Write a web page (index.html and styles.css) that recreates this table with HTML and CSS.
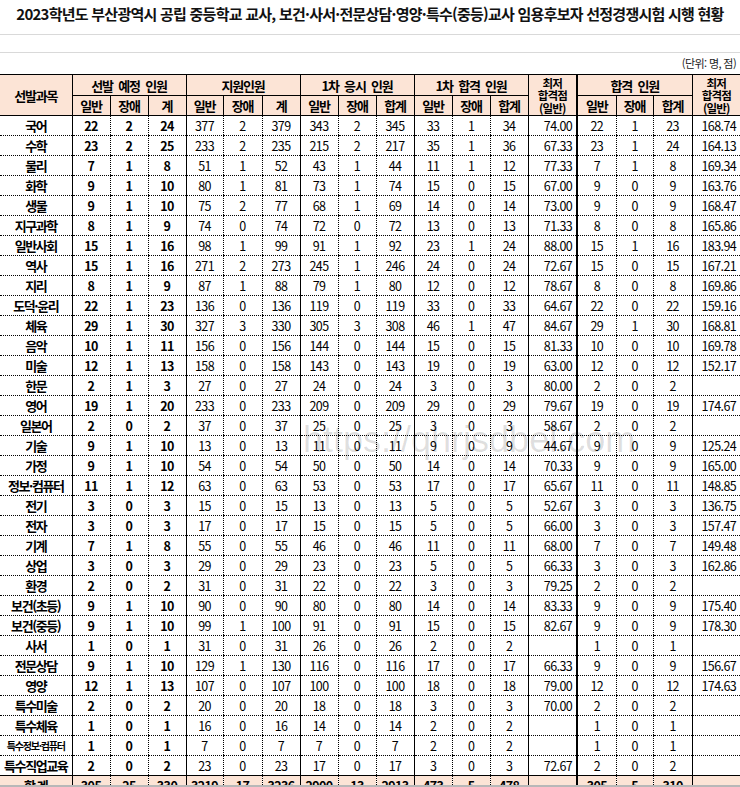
FILE: index.html
```html
<!DOCTYPE html>
<html lang="ko">
<head>
<meta charset="utf-8">
<title>2023학년도 부산광역시 임용후보자 선정경쟁시험 시행 현황</title>
<link rel="stylesheet" href="styles.css">
</head>
<body>
<div class="sheet">
  <h1 class="title">2023학년도 부산광역시 공립 중등학교 교사, 보건·사서·전문상담·영양·특수(중등)교사 임용후보자 선정경쟁시험 시행 현황</h1>
  <div class="blank-row"></div>
  <div class="unit-row">(단위: 명, 점)</div>
  <table class="stats">
    <colgroup>
      <col class="c-subj">
      <col class="c38"><col class="c38"><col class="c38">
      <col class="c37"><col class="c39"><col class="c38">
      <col class="c38"><col class="c38"><col class="c38">
      <col class="c38"><col class="c38"><col class="c38">
      <col class="c-score">
      <col class="c39"><col class="c37"><col class="c39">
      <col class="c-score2">
    </colgroup>
    <thead>
      <tr class="h1">
        <th rowspan="2" class="subj">선발과목</th>
        <th colspan="3">선발 예정 인원</th>
        <th colspan="3">지원인원</th>
        <th colspan="3">1차 응시 인원</th>
        <th colspan="3">1차 합격 인원</th>
        <th rowspan="2" class="score"><span class="ln">최저</span><span class="ln">합격점</span><span class="ln">(일반)</span></th>
        <th colspan="3" class="thick">합격 인원</th>
        <th rowspan="2" class="score last"><span class="ln">최저</span><span class="ln">합격점</span><span class="ln">(일반)</span></th>
      </tr>
      <tr class="h2">
        <th>일반</th><th>장애</th><th>계</th>
        <th>일반</th><th>장애</th><th>계</th>
        <th>일반</th><th>장애</th><th>합계</th>
        <th>일반</th><th>장애</th><th>합계</th>
        <th>일반</th><th>장애</th><th>합계</th>
      </tr>
    </thead>
    <tbody>
      <tr><td>국어</td><td>22</td><td>2</td><td>24</td><td>377</td><td>2</td><td>379</td><td>343</td><td>2</td><td>345</td><td>33</td><td>1</td><td>34</td><td>74.00</td><td>22</td><td>1</td><td>23</td><td>168.74</td></tr>
      <tr><td>수학</td><td>23</td><td>2</td><td>25</td><td>233</td><td>2</td><td>235</td><td>215</td><td>2</td><td>217</td><td>35</td><td>1</td><td>36</td><td>67.33</td><td>23</td><td>1</td><td>24</td><td>164.13</td></tr>
      <tr><td>물리</td><td>7</td><td>1</td><td>8</td><td>51</td><td>1</td><td>52</td><td>43</td><td>1</td><td>44</td><td>11</td><td>1</td><td>12</td><td>77.33</td><td>7</td><td>1</td><td>8</td><td>169.34</td></tr>
      <tr><td>화학</td><td>9</td><td>1</td><td>10</td><td>80</td><td>1</td><td>81</td><td>73</td><td>1</td><td>74</td><td>15</td><td>0</td><td>15</td><td>67.00</td><td>9</td><td>0</td><td>9</td><td>163.76</td></tr>
      <tr><td>생물</td><td>9</td><td>1</td><td>10</td><td>75</td><td>2</td><td>77</td><td>68</td><td>1</td><td>69</td><td>14</td><td>0</td><td>14</td><td>73.00</td><td>9</td><td>0</td><td>9</td><td>168.47</td></tr>
      <tr><td>지구과학</td><td>8</td><td>1</td><td>9</td><td>74</td><td>0</td><td>74</td><td>72</td><td>0</td><td>72</td><td>13</td><td>0</td><td>13</td><td>71.33</td><td>8</td><td>0</td><td>8</td><td>165.86</td></tr>
      <tr><td>일반사회</td><td>15</td><td>1</td><td>16</td><td>98</td><td>1</td><td>99</td><td>91</td><td>1</td><td>92</td><td>23</td><td>1</td><td>24</td><td>88.00</td><td>15</td><td>1</td><td>16</td><td>183.94</td></tr>
      <tr><td>역사</td><td>15</td><td>1</td><td>16</td><td>271</td><td>2</td><td>273</td><td>245</td><td>1</td><td>246</td><td>24</td><td>0</td><td>24</td><td>72.67</td><td>15</td><td>0</td><td>15</td><td>167.21</td></tr>
      <tr><td>지리</td><td>8</td><td>1</td><td>9</td><td>87</td><td>1</td><td>88</td><td>79</td><td>1</td><td>80</td><td>12</td><td>0</td><td>12</td><td>78.67</td><td>8</td><td>0</td><td>8</td><td>169.86</td></tr>
      <tr><td>도덕·윤리</td><td>22</td><td>1</td><td>23</td><td>136</td><td>0</td><td>136</td><td>119</td><td>0</td><td>119</td><td>33</td><td>0</td><td>33</td><td>64.67</td><td>22</td><td>0</td><td>22</td><td>159.16</td></tr>
      <tr><td>체육</td><td>29</td><td>1</td><td>30</td><td>327</td><td>3</td><td>330</td><td>305</td><td>3</td><td>308</td><td>46</td><td>1</td><td>47</td><td>84.67</td><td>29</td><td>1</td><td>30</td><td>168.81</td></tr>
      <tr><td>음악</td><td>10</td><td>1</td><td>11</td><td>156</td><td>0</td><td>156</td><td>144</td><td>0</td><td>144</td><td>15</td><td>0</td><td>15</td><td>81.33</td><td>10</td><td>0</td><td>10</td><td>169.78</td></tr>
      <tr><td>미술</td><td>12</td><td>1</td><td>13</td><td>158</td><td>0</td><td>158</td><td>143</td><td>0</td><td>143</td><td>19</td><td>0</td><td>19</td><td>63.00</td><td>12</td><td>0</td><td>12</td><td>152.17</td></tr>
      <tr><td>한문</td><td>2</td><td>1</td><td>3</td><td>27</td><td>0</td><td>27</td><td>24</td><td>0</td><td>24</td><td>3</td><td>0</td><td>3</td><td>80.00</td><td>2</td><td>0</td><td>2</td><td></td></tr>
      <tr><td>영어</td><td>19</td><td>1</td><td>20</td><td>233</td><td>0</td><td>233</td><td>209</td><td>0</td><td>209</td><td>29</td><td>0</td><td>29</td><td>79.67</td><td>19</td><td>0</td><td>19</td><td>174.67</td></tr>
      <tr><td>일본어</td><td>2</td><td>0</td><td>2</td><td>37</td><td>0</td><td>37</td><td>25</td><td>0</td><td>25</td><td>3</td><td>0</td><td>3</td><td>58.67</td><td>2</td><td>0</td><td>2</td><td></td></tr>
      <tr><td>기술</td><td>9</td><td>1</td><td>10</td><td>13</td><td>0</td><td>13</td><td>11</td><td>0</td><td>11</td><td>9</td><td>0</td><td>9</td><td>44.67</td><td>9</td><td>0</td><td>9</td><td>125.24</td></tr>
      <tr><td>가정</td><td>9</td><td>1</td><td>10</td><td>54</td><td>0</td><td>54</td><td>50</td><td>0</td><td>50</td><td>14</td><td>0</td><td>14</td><td>70.33</td><td>9</td><td>0</td><td>9</td><td>165.00</td></tr>
      <tr><td>정보·컴퓨터</td><td>11</td><td>1</td><td>12</td><td>63</td><td>0</td><td>63</td><td>53</td><td>0</td><td>53</td><td>17</td><td>0</td><td>17</td><td>65.67</td><td>11</td><td>0</td><td>11</td><td>148.85</td></tr>
      <tr><td>전기</td><td>3</td><td>0</td><td>3</td><td>15</td><td>0</td><td>15</td><td>13</td><td>0</td><td>13</td><td>5</td><td>0</td><td>5</td><td>52.67</td><td>3</td><td>0</td><td>3</td><td>136.75</td></tr>
      <tr><td>전자</td><td>3</td><td>0</td><td>3</td><td>17</td><td>0</td><td>17</td><td>15</td><td>0</td><td>15</td><td>5</td><td>0</td><td>5</td><td>66.00</td><td>3</td><td>0</td><td>3</td><td>157.47</td></tr>
      <tr><td>기계</td><td>7</td><td>1</td><td>8</td><td>55</td><td>0</td><td>55</td><td>46</td><td>0</td><td>46</td><td>11</td><td>0</td><td>11</td><td>68.00</td><td>7</td><td>0</td><td>7</td><td>149.48</td></tr>
      <tr><td>상업</td><td>3</td><td>0</td><td>3</td><td>29</td><td>0</td><td>29</td><td>23</td><td>0</td><td>23</td><td>5</td><td>0</td><td>5</td><td>66.33</td><td>3</td><td>0</td><td>3</td><td>162.86</td></tr>
      <tr><td>환경</td><td>2</td><td>0</td><td>2</td><td>31</td><td>0</td><td>31</td><td>22</td><td>0</td><td>22</td><td>3</td><td>0</td><td>3</td><td>79.25</td><td>2</td><td>0</td><td>2</td><td></td></tr>
      <tr><td>보건(초등)</td><td>9</td><td>1</td><td>10</td><td>90</td><td>0</td><td>90</td><td>80</td><td>0</td><td>80</td><td>14</td><td>0</td><td>14</td><td>83.33</td><td>9</td><td>0</td><td>9</td><td>175.40</td></tr>
      <tr><td>보건(중등)</td><td>9</td><td>1</td><td>10</td><td>99</td><td>1</td><td>100</td><td>91</td><td>0</td><td>91</td><td>15</td><td>0</td><td>15</td><td>82.67</td><td>9</td><td>0</td><td>9</td><td>178.30</td></tr>
      <tr><td>사서</td><td>1</td><td>0</td><td>1</td><td>31</td><td>0</td><td>31</td><td>26</td><td>0</td><td>26</td><td>2</td><td>0</td><td>2</td><td></td><td>1</td><td>0</td><td>1</td><td></td></tr>
      <tr><td>전문상담</td><td>9</td><td>1</td><td>10</td><td>129</td><td>1</td><td>130</td><td>116</td><td>0</td><td>116</td><td>17</td><td>0</td><td>17</td><td>66.33</td><td>9</td><td>0</td><td>9</td><td>156.67</td></tr>
      <tr><td>영양</td><td>12</td><td>1</td><td>13</td><td>107</td><td>0</td><td>107</td><td>100</td><td>0</td><td>100</td><td>18</td><td>0</td><td>18</td><td>79.00</td><td>12</td><td>0</td><td>12</td><td>174.63</td></tr>
      <tr><td>특수미술</td><td>2</td><td>0</td><td>2</td><td>20</td><td>0</td><td>20</td><td>18</td><td>0</td><td>18</td><td>3</td><td>0</td><td>3</td><td>70.00</td><td>2</td><td>0</td><td>2</td><td></td></tr>
      <tr><td>특수체육</td><td>1</td><td>0</td><td>1</td><td>16</td><td>0</td><td>16</td><td>14</td><td>0</td><td>14</td><td>2</td><td>0</td><td>2</td><td></td><td>1</td><td>0</td><td>1</td><td></td></tr>
      <tr><td class="small">특수정보·컴퓨터</td><td>1</td><td>0</td><td>1</td><td>7</td><td>0</td><td>7</td><td>7</td><td>0</td><td>7</td><td>2</td><td>0</td><td>2</td><td></td><td>1</td><td>0</td><td>1</td><td></td></tr>
      <tr class="end"><td>특수직업교육</td><td>2</td><td>0</td><td>2</td><td>23</td><td>0</td><td>23</td><td>17</td><td>0</td><td>17</td><td>3</td><td>0</td><td>3</td><td>72.67</td><td>2</td><td>0</td><td>2</td><td></td></tr>
      <tr class="total"><td>합 계</td><td>305</td><td>25</td><td>330</td><td>3219</td><td>17</td><td>3236</td><td>2900</td><td>13</td><td>2913</td><td>473</td><td>5</td><td>478</td><td></td><td>305</td><td>5</td><td>310</td><td></td></tr>
    </tbody>
  </table>
</div>
<div class="watermark">https://qhrjsdbel.com</div>
<div class="scrollbar"></div>
</body>
</html>
```

FILE: styles.css
```css
* { box-sizing: border-box; }
html, body { margin: 0; padding: 0; background: #fff; }
body {
  font-family: "Noto Sans CJK KR", "Noto Sans", sans-serif;
  color: #000;
  position: relative;
  width: 740px;
  height: 787px;
  overflow: hidden;
}
.sheet { width: 740px; }
.title {
  margin: 0;
  height: 35px;
  border-bottom: 1px solid #d9d9d9;
  font-size: 15px;
  font-weight: bold;
  line-height: 28px;
  text-align: center;
  letter-spacing: -0.75px;
  white-space: nowrap;
  color: #111;
}
.blank-row { height: 18px; border-bottom: 1px solid #d9d9d9; }
.unit-row {
  height: 21px;
  font-size: 11px;
  line-height: 20px;
  text-align: right;
  padding-right: 4px;
  letter-spacing: -0.6px;
  color: #222;
}

.stats { border-collapse: collapse; table-layout: fixed; width: 740px; }
.c-subj { width: 72px; }
.c37 { width: 37px; }
.c38 { width: 38px; }
.c39 { width: 39px; }
.c-score { width: 49px; }
.c-score2 { width: 48px; }

.stats th, .stats td {
  padding: 0;
  text-align: center;
  white-space: nowrap;
  overflow: hidden;
}
.stats thead th {
  background: #fce4d6;
  font-weight: bold;
  font-size: 13px;
  letter-spacing: -1.2px;
  word-spacing: 3px;
  border: 1px solid #000;
}
.h1 { height: 21px; }
.h1 th { border-top: 2px solid #000; }
.h1 th.subj { border-left: none; }
.h1 th.thick { border-left: 2px solid #000; }
.h1 th.last { border-right: none; }
.h1 th.score {
  font-size: 11.5px;
  letter-spacing: -0.8px;
  padding-top: 1px;
}
.h1 th.score .ln {
  display: block;
  height: 12.5px;
  line-height: 12.5px;
}
.h2 { height: 20px; }
.h2 th { border-left: 1px dotted #000; }
.h2 th:nth-child(1), .h2 th:nth-child(4), .h2 th:nth-child(7), .h2 th:nth-child(10) { border-left: 1px solid #000; }
.h2 th:nth-child(13) { border-left: 2px solid #000; }

.stats tbody tr { height: 20px; }
.stats td {
  font-size: 12.5px;
  letter-spacing: -0.6px;
  border-left: 1px dotted #000;
  border-bottom: 1px dotted #000;
  line-height: 18px;
}
.stats td:nth-child(1) {
  border-left: none;
  font-weight: bold;
  font-size: 13px;
  letter-spacing: -1.4px;
}
.stats td:nth-child(2), .stats td:nth-child(3), .stats td:nth-child(4) { font-weight: bold; }
.stats td:nth-child(2), .stats td:nth-child(5), .stats td:nth-child(8),
.stats td:nth-child(11), .stats td:nth-child(14), .stats td:nth-child(18) { border-left: 1px solid #000; }
.stats td:nth-child(15) { border-left: 2px solid #000; }
.stats td:nth-child(14), .stats td:nth-child(18) { text-align: right; padding-right: 4px; }
.stats td.small { font-size: 10px; letter-spacing: -1.2px; }
.stats tr.end td { border-bottom: 1px solid #000; }
.stats tr.total td { background: #fce4d6; font-weight: bold; }

.watermark {
  position: absolute;
  left: 303px;
  top: 422px;
  font-family: "Liberation Sans", sans-serif;
  font-size: 36px;
  line-height: 1;
  color: rgba(0, 0, 0, 0.13);
  white-space: nowrap;
  pointer-events: none;
}
.scrollbar {
  position: absolute;
  left: 0;
  right: 0;
  bottom: 0;
  height: 2px;
  background: #b8b8b8;
}
```
